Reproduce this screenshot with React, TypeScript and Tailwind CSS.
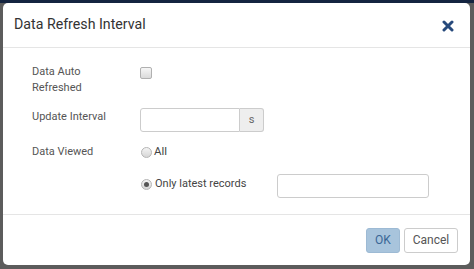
const font = "font-['Roboto','Liberation_Sans',sans-serif]";

const Radio = ({ checked }: { checked?: boolean }) => (
  <span className="flex h-[11px] w-[11px] shrink-0 items-center justify-center rounded-full border border-[#b5b5b5] bg-gradient-to-b from-[#f4f4f4] to-[#d6d6d6]">
    {checked && <span className="h-[5px] w-[5px] rounded-full bg-[#555]" />}
  </span>
);

const App = (): React.JSX.Element => {
  return (
    <div className={`h-[269px] w-[474px] overflow-hidden border-t-[3px] border-[#142440] bg-[#5c5c5c] ${font}`}>
      <div className="ml-[3px] flex h-[262px] w-[467px] flex-col rounded-[5px] bg-white">
        <div className="flex h-[45px] items-center justify-between border-b border-[#e5e5e5] pl-[11px] pr-[16px]">
          <h1 className="text-[14.2px] text-[#333]">Data Refresh Interval</h1>
          <svg width="12" height="12" viewBox="0 0 12 12" className="mt-[2px]">
            <path d="M2 2 L10 10 M10 2 L2 10" stroke="#274a7c" strokeWidth="3" strokeLinecap="round" />
          </svg>
        </div>

        <div className="flex flex-col pb-[16px] pt-[16px] text-[11px] text-[#555]">
          <div className="flex h-[32px]">
            <div className="w-[137px] shrink-0 pl-[29px] leading-[16px]">
              Data Auto
              <br />
              Refreshed
            </div>
            <span className="mt-[3px] h-[12px] w-[12px] rounded-[2px] border border-[#b0b0b0] bg-gradient-to-b from-[#f6f6f6] to-[#dadada]" />
          </div>

          <div className="mt-[12px] flex h-[24px]">
            <div className="w-[137px] shrink-0 pl-[29px] pt-[1px] leading-[16px]">Update Interval</div>
            <div className="flex h-[24px]">
              <div className="h-full w-[100px] rounded-l-[3px] border border-[#ccc]" />
              <div className="flex h-full w-[24px] items-center justify-center rounded-r-[3px] border border-l-0 border-[#ccc] bg-[#eee] text-[11px] text-[#666]">
                s
              </div>
            </div>
          </div>

          <div className="mt-[12px] flex h-[16px] items-center">
            <div className="w-[138px] shrink-0 pl-[29px] leading-[16px]">Data Viewed</div>
            <div className="flex items-center gap-[2px]">
              <Radio />
              <span className="text-[11.5px] text-[#444]">All</span>
            </div>
          </div>

          <div className="mt-[14px] flex h-[24px]">
            <div className="w-[138px] shrink-0" />
            <div className="flex w-[136px] shrink-0 items-center gap-[3px] pb-[4px]">
              <Radio checked />
              <span className="text-[#444]">Only latest records</span>
            </div>
            <div className="h-[24px] w-[152px] rounded-[3px] border border-[#ccc]" />
          </div>
        </div>

        <div className="flex flex-1 items-center justify-end gap-[4px] border-t border-[#e5e5e5] pr-[12px]">
          <button className="h-[25px] w-[34px] rounded-[3px] border border-[#9dbad4] bg-[#a8c4dc] text-[12px] text-[#3a6796]">
            OK
          </button>
          <button className="h-[25px] w-[54px] rounded-[3px] border border-[#ccc] bg-white text-[12px] text-[#555]">
            Cancel
          </button>
        </div>
      </div>
    </div>
  );
};

export default App;
